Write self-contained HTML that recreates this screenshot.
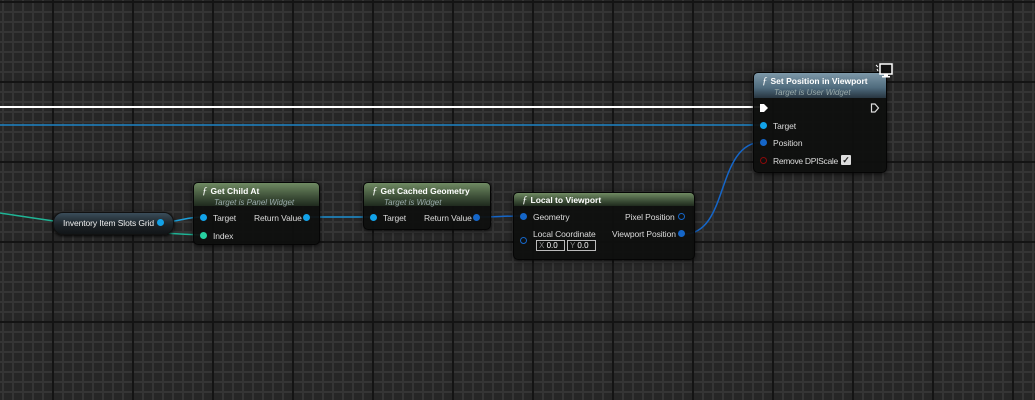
<!DOCTYPE html>
<html><head><meta charset="utf-8"><style>
html,body{margin:0;padding:0}
body{width:1035px;height:400px;overflow:hidden;position:relative;font-family:"Liberation Sans",sans-serif;background:#262626}
.bgmin{position:absolute;inset:0;
background-image:linear-gradient(90deg,#353535 2px,transparent 2px),linear-gradient(#353535 2px,transparent 2px);
background-size:10px 10px;background-position:2px 1px;}
.bgmaj{position:absolute;inset:0;
background-image:linear-gradient(90deg,#141414 2px,transparent 2px),linear-gradient(#141414 2px,transparent 2px);
background-size:80px 80px;background-position:52px 1px;}
svg.w{position:absolute;left:0;top:0}
.node{position:absolute;background:rgba(14,15,14,0.93);border:1px solid #050505;border-radius:5px;box-shadow:0 1px 4px rgba(0,0,0,.7);color:#ddd;font-size:8.5px}
.hd{border-radius:4px 4px 0 0;padding:2px 0 0 8px;height:100%;box-sizing:border-box;color:#fff;font-weight:bold;font-size:8.5px}
.hd i{font-family:"Liberation Serif",serif;color:#fff;font-size:11px;margin-right:3px;font-weight:normal}
.sub{font-style:italic;color:#9aa;font-weight:normal;font-size:8px;padding-left:12px;margin-top:1px}
.green{background:linear-gradient(#6f8a62,#3d4f38 60%,#1f2a1e)}
.blue{background:linear-gradient(#7d98a8,#4e6a7c 60%,#273540)}
.t{position:absolute;white-space:nowrap;color:#dcdcdc;font-size:8.5px;letter-spacing:-0.1px}
.pin{position:absolute;width:7px;height:7px;border-radius:50%}
.box{position:absolute;border:1px solid #bbb;height:11px;font-size:8px;color:#fff;line-height:10px;box-sizing:border-box;padding:0 2px}
</style></head><body>
<div class="bgmin"></div>
<div class="bgmaj"></div>
<svg class="w" width="1035" height="400">
<line x1="0" y1="107" x2="760" y2="107" stroke="#fff" stroke-width="2"/>
<line x1="0" y1="125" x2="760" y2="125" stroke="#1d84c6" stroke-width="1.5"/>
<path d="M0 213 C60 222 120 232 203 235" stroke="#1fb495" stroke-width="1.5" fill="none"/>
<path d="M162 222 C180 222 185 217 203 217" stroke="#1d9ed8" stroke-width="1.5" fill="none"/>
<path d="M308 217 L373 217" stroke="#1d8fd0" stroke-width="1.5" fill="none"/>
<path d="M478 217 C500 217 500 216 522 216" stroke="#1566c8" stroke-width="1.5" fill="none"/>
<path d="M684 234 C730 234 715 142 763 142" stroke="#1566c8" stroke-width="1.5" fill="none"/>
</svg>

<div style="position:absolute;left:53px;top:212px;width:119px;height:21px;border-radius:10px;border:1px solid #111;background:linear-gradient(#3a4d5a,#1c2328 55%,#121517);box-shadow:0 1px 3px #000">
<span class="t" style="left:9px;top:5px;color:#eee">Inventory Item Slots Grid</span>
<span class="pin" style="left:103px;top:6px;background:#12a2e8"></span></div>

<div class="node" style="left:193px;top:182px;width:125px;height:61px">
<div class="green hd" style="height:23px"><i>ƒ</i>Get Child At<div class="sub">Target is Panel Widget</div></div>
<span class="pin" style="left:6px;top:31px;background:#12a2e8"></span><span class="t" style="left:19px;top:30px">Target</span>
<span class="t" style="left:60px;top:30px">Return Value</span><span class="pin" style="left:109px;top:31px;background:#12a2e8"></span>
<span class="pin" style="left:6px;top:49px;background:#27d0a0"></span><span class="t" style="left:19px;top:48px">Index</span>
</div>

<div class="node" style="left:363px;top:182px;width:126px;height:46px">
<div class="green hd" style="height:23px"><i>ƒ</i>Get Cached Geometry<div class="sub">Target is Widget</div></div>
<span class="pin" style="left:6px;top:31px;background:#12a2e8"></span><span class="t" style="left:19px;top:30px">Target</span>
<span class="t" style="left:60px;top:30px">Return Value</span><span class="pin" style="left:109px;top:31px;background:#1566c8"></span>
</div>

<div class="node" style="left:513px;top:192px;width:180px;height:66px">
<div class="green hd" style="height:13px;padding-top:1px"><i>ƒ</i>Local to Viewport</div>
<span class="pin" style="left:6px;top:20px;background:#1566c8"></span><span class="t" style="left:19px;top:19px">Geometry</span>
<span class="t" style="left:111px;top:19px">Pixel Position</span><span class="pin" style="left:164px;top:20px;border:1.5px solid #1566c8;width:5px;height:5px"></span>
<span class="pin" style="left:6px;top:44px;border:1.5px solid #1566c8;width:5px;height:5px"></span><span class="t" style="left:19px;top:36px">Local Coordinate</span>
<span class="t" style="left:98px;top:36px">Viewport Position</span><span class="pin" style="left:164px;top:37px;background:#1566c8"></span>
<div class="box" style="left:22px;top:47px;width:29px"><span style="color:#888">X</span> 0.0</div>
<div class="box" style="left:53px;top:47px;width:29px"><span style="color:#888">Y</span> 0.0</div>
</div>

<div class="node" style="left:753px;top:72px;width:132px;height:99px">
<div class="blue hd" style="height:25px"><i>ƒ</i>Set Position in Viewport<div class="sub">Target is User Widget</div></div>
<svg style="position:absolute;left:5px;top:30px" width="10" height="10"><path d="M1 1 H5 L9 5 L5 9 H1 Z" fill="#fff"/></svg>
<svg style="position:absolute;left:116px;top:30px" width="10" height="10"><path d="M1.5 1 H5 L8.5 5 L5 9 H1.5 Z" fill="none" stroke="#ddd" stroke-width="1.2"/></svg>
<span class="pin" style="left:6px;top:49px;background:#12a2e8"></span><span class="t" style="left:19px;top:48px">Target</span>
<span class="pin" style="left:6px;top:66px;background:#1566c8"></span><span class="t" style="left:19px;top:65px">Position</span>
<span class="pin" style="left:6px;top:84px;border:1.5px solid #8a0a0a;width:5px;height:5px"></span><span class="t" style="left:19px;top:83px;letter-spacing:-0.3px">Remove DPIScale</span>
<div style="position:absolute;left:87px;top:82px;width:10px;height:10px;background:#ddd;border-radius:1px;color:#222;font-size:9px;line-height:10px;text-align:center;font-weight:bold">✓</div>
</div>
<svg style="position:absolute;left:875px;top:63px" width="18" height="16"><path d="M1 2 L3 4 M2 6 L3 8" stroke="#fff" stroke-width="1"/><rect x="5" y="1" width="12" height="10" fill="#111" stroke="#fff" stroke-width="1.5"/><rect x="9" y="11" width="4" height="2" fill="#fff"/><rect x="7" y="13" width="8" height="1.5" fill="#fff"/></svg>
</body></html>
